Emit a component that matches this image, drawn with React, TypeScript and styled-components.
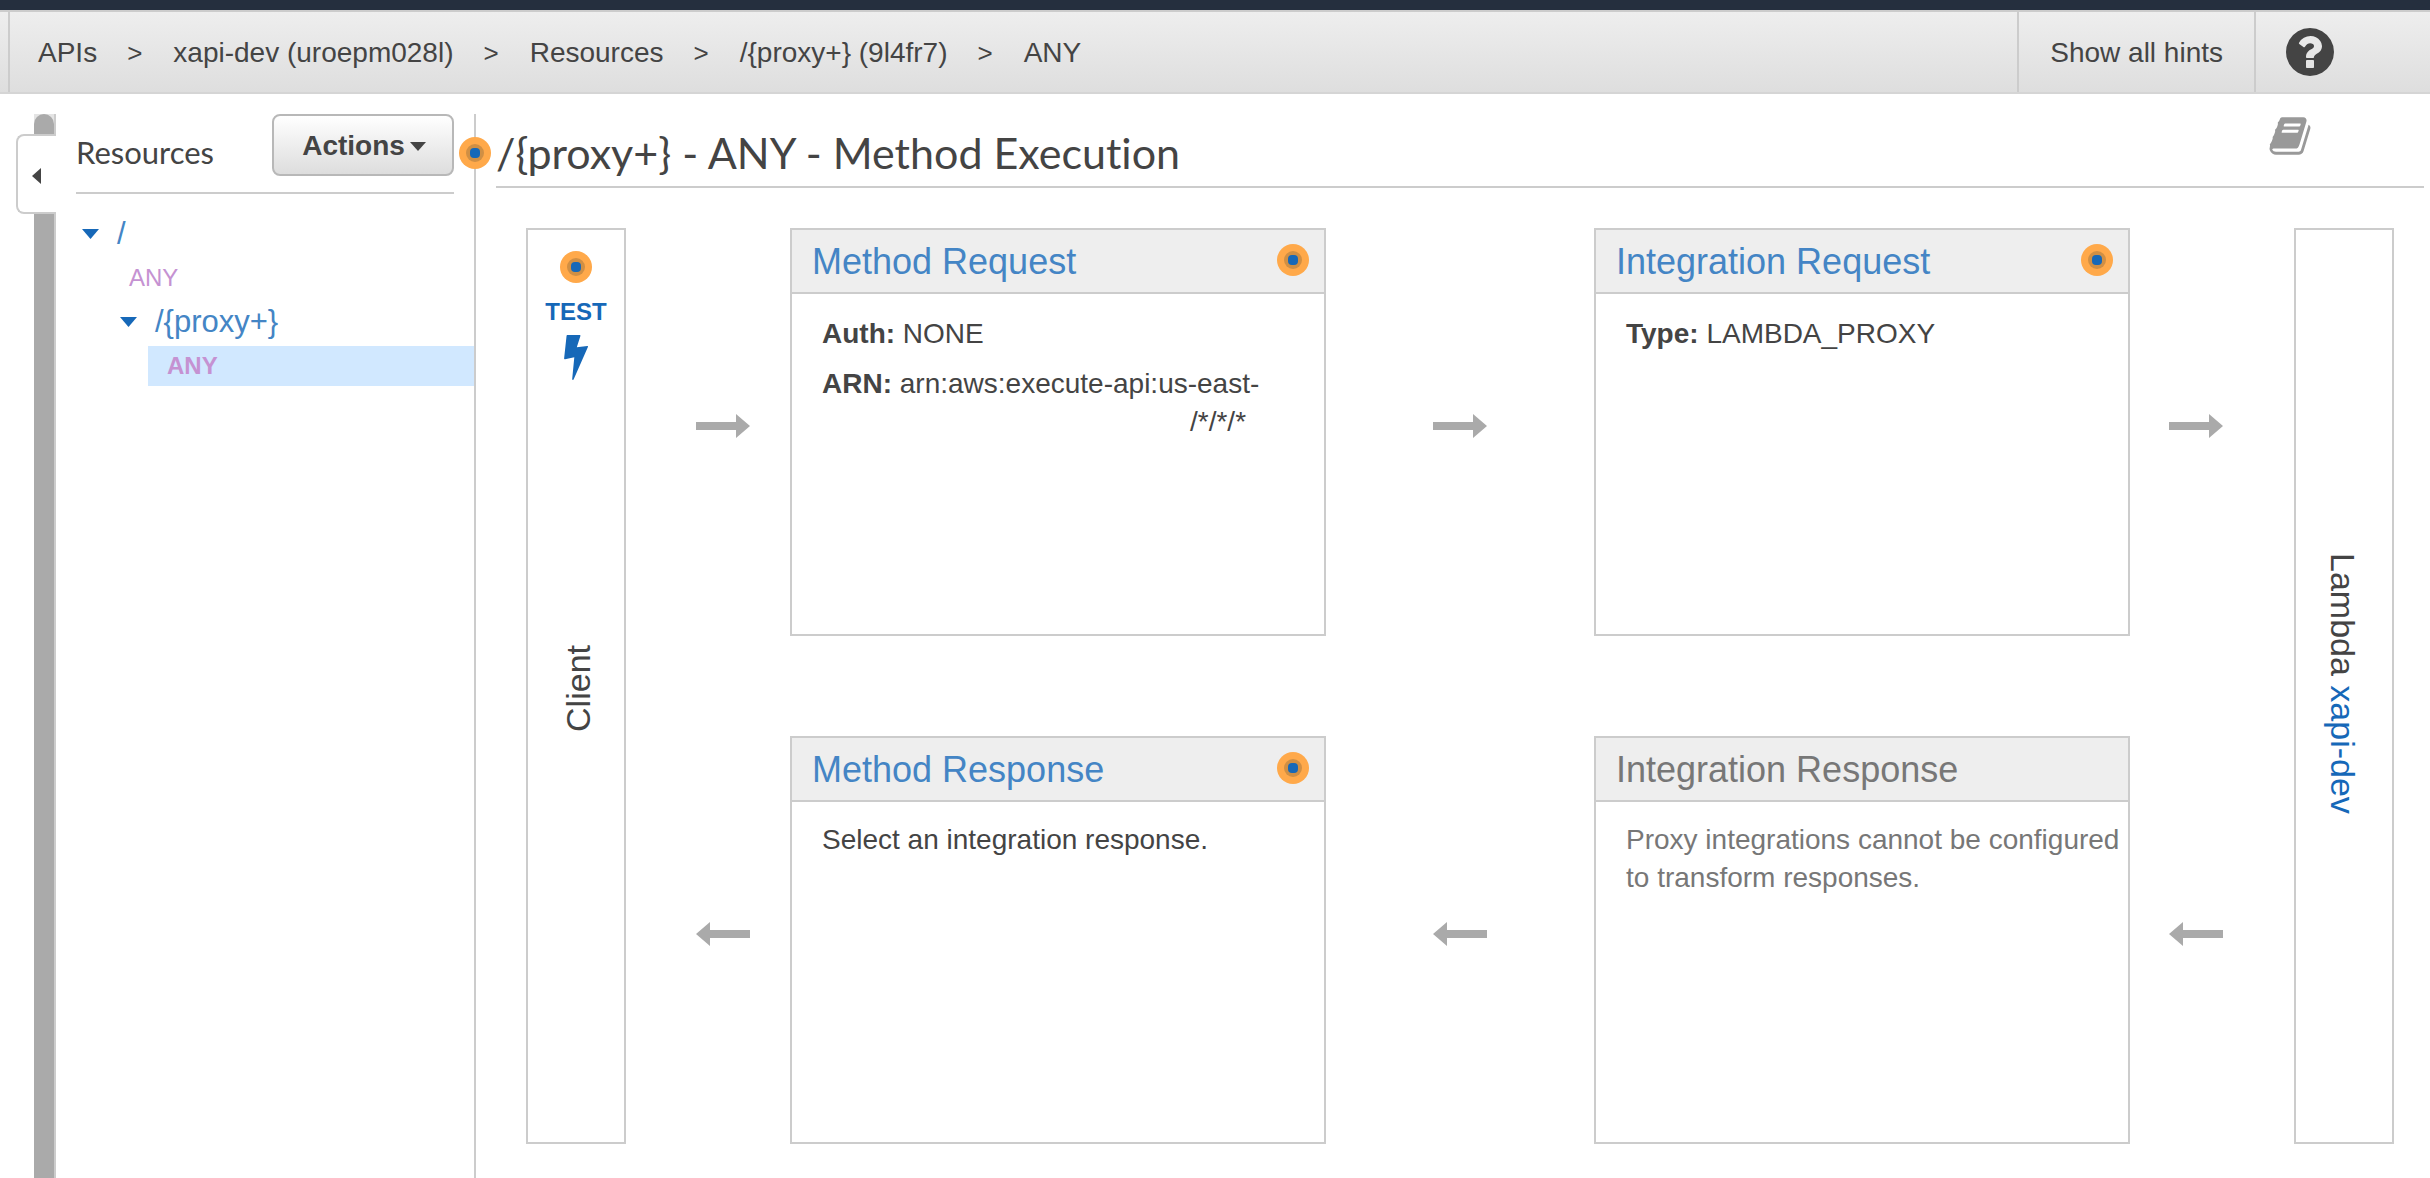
import React from 'react';
import styled, { createGlobalStyle } from 'styled-components';

const GlobalStyle = createGlobalStyle`
  * { box-sizing: border-box; }
  body {
    margin: 0;
    background: #fff;
    color: #444;
    font: 28px/38px "Liberation Sans", Arial, sans-serif;
  }
  #root { min-height: 100vh; display: flex; flex-direction: column; }
  a { color: inherit; text-decoration: none; }
  button { font: inherit; color: inherit; cursor: pointer; }
  h1, h2, p, ul, ol { margin: 0; padding: 0; font-weight: normal; }
  li { list-style: none; }
  svg { display: block; }
`;

const TopStrip = styled.div`
  height: 10px;
  background: #252f3e;
`;

const NavBar = styled.header`
  display: flex;
  height: 84px;
  padding-left: 8px;
  border-top: 2px solid #ccc;
  border-bottom: 2px solid #d5d5d5;
  background: linear-gradient(#eee, #dedede);
`;

const Crumbs = styled.ol`
  display: flex;
  flex: 1;
  align-items: center;
  padding: 2px 28px 0;
  border-left: 2px solid #ccc;
  white-space: nowrap;
`;

const Crumb = styled.li`
  display: flex;
  & + &::before {
    content: '>';
    margin: 0 31px 0 30px;
    font-size: 26px;
  }
`;

const NavButton = styled.button`
  padding: 2px 31px 0;
  border: 0;
  border-left: 2px solid #ccc;
  background: none;
`;

const HelpButton = styled(NavButton)`
  width: 176px;
  padding-top: 0;
  padding-left: 30px;
`;

const Body = styled.div`
  display: flex;
  flex: 1;
  padding-top: 20px;
`;

const Rail = styled.div`
  position: relative;
  flex: none;
  width: 22px;
  margin-left: 34px;
  border-right: 2px solid #ccc;
  background: #e4e4e4;
`;

const Thumb = styled.div`
  height: 100%;
  border-radius: 10px 10px 0 0;
  background: #aaa;
`;

const CollapseTab = styled.button`
  position: absolute;
  top: 20px;
  right: -2px;
  display: flex;
  align-items: center;
  width: 40px;
  height: 80px;
  padding: 4px 0 0 14px;
  border: 2px solid #ccc;
  border-right: 0;
  border-radius: 8px 0 0 8px;
  background: #fff;
`;

const Sidebar = styled.aside`
  position: relative;
  flex: none;
  width: 420px;
  border-right: 2px solid #ccc;
`;

const SidebarHead = styled.div`
  display: flex;
  justify-content: space-between;
  height: 80px;
  margin: 0 20px;
  border-bottom: 2px solid #ccc;
`;

const SidebarTitle = styled.h2`
  padding-top: 19px;
  font: 31px/38px Lato, sans-serif;
`;

const ActionsButton = styled.button`
  display: flex;
  align-items: center;
  justify-content: center;
  gap: 5px;
  width: 182px;
  height: 62px;
  padding: 2px 0 0 2px;
  border: 2px solid #b8b8b8;
  border-radius: 8px;
  background: linear-gradient(#fff, #ddd);
  font-weight: bold;
`;

const Tree = styled.ul`
  padding-top: 16px;
`;

const Row = styled.li<{ $indent: number }>`
  display: flex;
  align-items: center;
  gap: 18px;
  height: 48px;
  padding-left: ${(p) => p.$indent}px;
`;

const MethodRow = styled.li<{ $indent: number; $selected?: boolean }>`
  height: 40px;
  margin-left: ${(p) => p.$indent}px;
  padding-left: 19px;
  background: ${(p) => (p.$selected ? '#d1e8ff' : 'none')};
  color: #c592d2;
  font-size: 24px;
  font-weight: ${(p) => (p.$selected ? 'bold' : 'normal')};
  line-height: 40px;
`;

const ResourceLink = styled.a`
  && { color: #4485c5; }
  font-size: 31px;
`;

const Hint = styled.span`
  display: grid;
  place-items: center;
  flex: none;
  width: 32px;
  height: 32px;
  border-radius: 50%;
  background: #ffa94a;
  &::before, &::after {
    content: '';
    grid-area: 1 / 1;
    width: 18px;
    height: 18px;
    border-radius: 9px;
    background: #d08f44;
  }
  &::after {
    width: 10px;
    height: 10px;
    border-radius: 4px;
    background: #1668b8;
  }
`;

const PaneHint = styled(Hint)`
  position: absolute;
  top: 23px;
  right: -17px;
`;

const Main = styled.main`
  flex: 1;
  min-width: 0;
  padding: 0 6px 0 20px;
`;

const TitleRow = styled.div`
  display: flex;
  align-items: flex-start;
  justify-content: space-between;
  height: 74px;
  padding-right: 112px;
  border-bottom: 2px solid #ccc;
`;

const Title = styled.h1`
  padding-top: 11px;
  font: 43px/56px Lato, sans-serif;
  font-variant-ligatures: none;
`;

const DocButton = styled.button`
  padding: 0;
  border: 0;
  background: none;
  color: #999;
`;

const Flow = styled.div`
  display: grid;
  grid-template-columns: 100px 164fr 536fr 268fr 536fr 164fr 100px;
  grid-template-rows: 408px 408px;
  row-gap: 100px;
  padding: 40px 30px 34px;
`;

const EndColumn = styled.section<{ $column: number }>`
  display: grid;
  grid-area: 1 / ${(p) => p.$column} / 3;
  place-items: center;
  border: 2px solid #ccc;
  & > * { grid-area: 1 / 1; }
`;

const TestLink = styled.a`
  display: flex;
  flex-direction: column;
  align-items: center;
  align-self: start;
  padding-top: 21px;
  && { color: #1668b8; }
  font-size: 24px;
  font-weight: bold;
  svg { margin-top: 4px; }
  span + b { margin-top: 10px; }
`;

const VerticalLabel = styled.p<{ $up?: boolean }>`
  padding: 0 3px 5px 0;
  writing-mode: vertical-rl;
  transform: ${(p) => (p.$up ? 'rotate(180deg)' : 'none')};
  font-size: 34px;
  a { color: #1668b8; }
`;

const ArrowCell = styled.div<{ $side: 'start' | 'center' | 'end' }>`
  display: flex;
  align-items: center;
  justify-content: center;
  padding-left: ${(p) => (p.$side === 'start' ? 30 : 0)}px;
  padding-right: ${(p) => (p.$side === 'end' ? 32 : 0)}px;
  padding-bottom: 12px;
`;

const Card = styled.section<{ $muted?: boolean }>`
  border: 2px solid #ccc;
  color: ${(p) => (p.$muted ? '#777' : '#444')};
`;

const CardHead = styled.div`
  display: flex;
  align-items: center;
  justify-content: space-between;
  height: 64px;
  padding: 0 15px 0 20px;
  border-bottom: 2px solid #ccc;
  background: #eee;
  h2 { padding-top: 1px; font-size: 36px; }
  a { color: #4485c5; }
  span { margin-bottom: 3px; }
`;

const CardBody = styled.div<{ $message?: boolean }>`
  display: flex;
  flex-direction: column;
  gap: 12px;
  padding: ${(p) => (p.$message ? 19 : 21)}px 0 0 30px;
`;

const ArnTail = styled.span`
  display: block;
  padding-left: 368px;
`;

const Caret = ({ color = '#444', width = 16, height = 9 }) => (
  <svg width={width} height={height} viewBox="0 0 16 9" preserveAspectRatio="none" aria-hidden="true">
    <path d="M0 0h16L8 9z" fill={color} />
  </svg>
);

const Arrow = ({ back = false }: { back?: boolean }) => (
  <svg width="54" height="24" viewBox="0 0 54 24" aria-hidden="true">
    <path d={back ? 'M54 8v8H14v8L0 12 14 0v8z' : 'M0 8h40V0l14 12-14 12v-8H0z'} fill="#aaa" />
  </svg>
);

const HelpIcon = () => (
  <svg width="48" height="48" viewBox="128 128 1536 1536" fill="#444" aria-hidden="true">
    <path d="M1024 1376v-192q0-14-9-23t-23-9h-192q-14 0-23 9t-9 23v192q0 14 9 23t23 9h192q14 0 23-9t9-23zm256-672q0-88-55.500-163t-138.500-116-170-41q-243 0-371 213-15 24 8 42l132 100q7 6 19 6 16 0 25-12 53-68 86-92 34-24 86-24 48 0 85.500 26t37.500 59q0 38-20 61t-68 45q-63 28-115.500 86.500t-52.500 125.500v36q0 14 9 23t23 9h192q14 0 23-9t9-23q0-19 21.500-49.500t54.500-49.500q32-18 49-28.500t46-35 44.500-48 28-60.500 12.500-81zm384 192q0 209-103 385.500t-279.500 279.500-385.500 103-385.500-103-279.500-279.500-103-385.500 103-385.500 279.500-279.500 385.500-103 385.500 103 279.500 279.500 103 385.500z" />
  </svg>
);

const BookIcon = () => (
  <svg width="44" height="44" viewBox="0 0 1792 1792" fill="currentColor" aria-hidden="true">
    <path d="M1703 478q40 57 18 129l-275 906q-19 64-76.500 107.500t-122.500 43.500h-923q-77 0-148.500-53.500t-99.500-131.500q-24-67-2-127 0-4 3-27t4-37q1-8-3-21.500t-3-19.500q2-11 8-21t16.500-23.500 16.500-23.500q23-38 45-91.500t30-91.500q3-10 .5-30t-.5-28q3-11 17-28t17-23q21-36 42-92t25-90q1-9-2.500-32t.5-28q4-13 22-30.500t22-22.500q19-26 42.500-84.500t27.500-96.500q1-8-3-25.500t-2-26.500q2-8 9-18t18-23 17-21q8-12 16.500-30.500t15-35 16-36 19.500-32 26.500-23.500 36-11.500 47.500 5.500l-1 3q38-9 51-9h761q74 0 114 56t18 130l-274 906q-36 119-71.500 153.500t-128.500 34.500h-869q-27 0-38 15-11 16-1 43 24 70 144 70h923q29 0 56-15.500t35-41.500l300-987q7-22 5-57 38 15 59 43zm-1064 2q-4 13 2 22.500t20 9.500h608q13 0 25.500-9.500t16.500-22.500l21-64q4-13-2-22.500t-20-9.500h-608q-13 0-25.500 9.500t-16.500 22.500zm-83 256q-4 13 2 22.500t20 9.500h608q13 0 25.500-9.500t16.500-22.500l21-64q4-13-2-22.500t-20-9.500h-608q-13 0-25.500 9.500t-16.500 22.500z" />
  </svg>
);

const BoltIcon = () => (
  <svg width="24" height="46" viewBox="0 0 24 46" fill="currentColor" aria-hidden="true">
    <path d="M2.600.4Q2.700 0 3.200 0H15.600Q16.700 0 16.400 1L12.800 12.200 23.300 11Q24.300 10.900 23.900 11.900L9.700 44.200Q8.400 46 8.200 44L10.300 22.200 1 24.300Q0 24.500 .1 23.400Z" />
  </svg>
);

export default function App() {
  return (
    <>
      <GlobalStyle />
      <TopStrip />
      <NavBar>
        <Crumbs>
          <Crumb><a href="#apis">APIs</a></Crumb>
          <Crumb><a href="#api">xapi-dev (uroepm028l)</a></Crumb>
          <Crumb><a href="#resources">Resources</a></Crumb>
          <Crumb><a href="#proxy">{'/{proxy+} (9l4fr7)'}</a></Crumb>
          <Crumb>ANY</Crumb>
        </Crumbs>
        <NavButton>Show all hints</NavButton>
        <HelpButton aria-label="Help"><HelpIcon /></HelpButton>
      </NavBar>
      <Body>
        <Rail>
          <Thumb />
          <CollapseTab aria-label="Collapse resources">
            <svg width="9" height="16" viewBox="0 0 9 16" aria-hidden="true"><path d="M9 0v16L0 8z" fill="#444" /></svg>
          </CollapseTab>
        </Rail>
        <Sidebar>
          <SidebarHead>
            <SidebarTitle>Resources</SidebarTitle>
            <ActionsButton>Actions<Caret /></ActionsButton>
          </SidebarHead>
          <Tree>
            <Row $indent={26}><Caret color="#1668b8" width={17} height={10} /><ResourceLink href="#root-path">/</ResourceLink></Row>
            <MethodRow $indent={54}><a href="#root-any">ANY</a></MethodRow>
            <Row $indent={64}><Caret color="#1668b8" width={17} height={10} /><ResourceLink href="#proxy">{'/{proxy+}'}</ResourceLink></Row>
            <MethodRow $indent={92} $selected><a href="#proxy-any">ANY</a></MethodRow>
          </Tree>
          <PaneHint />
        </Sidebar>
        <Main>
          <TitleRow>
            <Title>{'/{proxy+} - ANY - Method Execution'}</Title>
            <DocButton aria-label="Documentation"><BookIcon /></DocButton>
          </TitleRow>
          <Flow>
            <EndColumn $column={1}>
              <TestLink href="#test"><Hint /><b>TEST</b><BoltIcon /></TestLink>
              <VerticalLabel $up>Client</VerticalLabel>
            </EndColumn>
            <ArrowCell $side="start"><Arrow /></ArrowCell>
            <Card>
              <CardHead><h2><a href="#method-request">Method Request</a></h2><Hint /></CardHead>
              <CardBody>
                <p><b>Auth:</b> NONE</p>
                <p><b>ARN:</b> arn:aws:execute-api:us-east-<ArnTail>/*/*/*</ArnTail></p>
              </CardBody>
            </Card>
            <ArrowCell $side="center"><Arrow /></ArrowCell>
            <Card>
              <CardHead><h2><a href="#integration-request">Integration Request</a></h2><Hint /></CardHead>
              <CardBody><p><b>Type:</b> LAMBDA_PROXY</p></CardBody>
            </Card>
            <ArrowCell $side="end"><Arrow /></ArrowCell>
            <EndColumn $column={7}>
              <VerticalLabel>Lambda <a href="#lambda">xapi-dev</a></VerticalLabel>
            </EndColumn>
            <ArrowCell $side="start"><Arrow back /></ArrowCell>
            <Card>
              <CardHead><h2><a href="#method-response">Method Response</a></h2><Hint /></CardHead>
              <CardBody $message><p>Select an integration response.</p></CardBody>
            </Card>
            <ArrowCell $side="center"><Arrow back /></ArrowCell>
            <Card $muted>
              <CardHead><h2>Integration Response</h2></CardHead>
              <CardBody $message><p>Proxy integrations cannot be configured to transform responses.</p></CardBody>
            </Card>
            <ArrowCell $side="end"><Arrow back /></ArrowCell>
          </Flow>
        </Main>
      </Body>
    </>
  );
}
